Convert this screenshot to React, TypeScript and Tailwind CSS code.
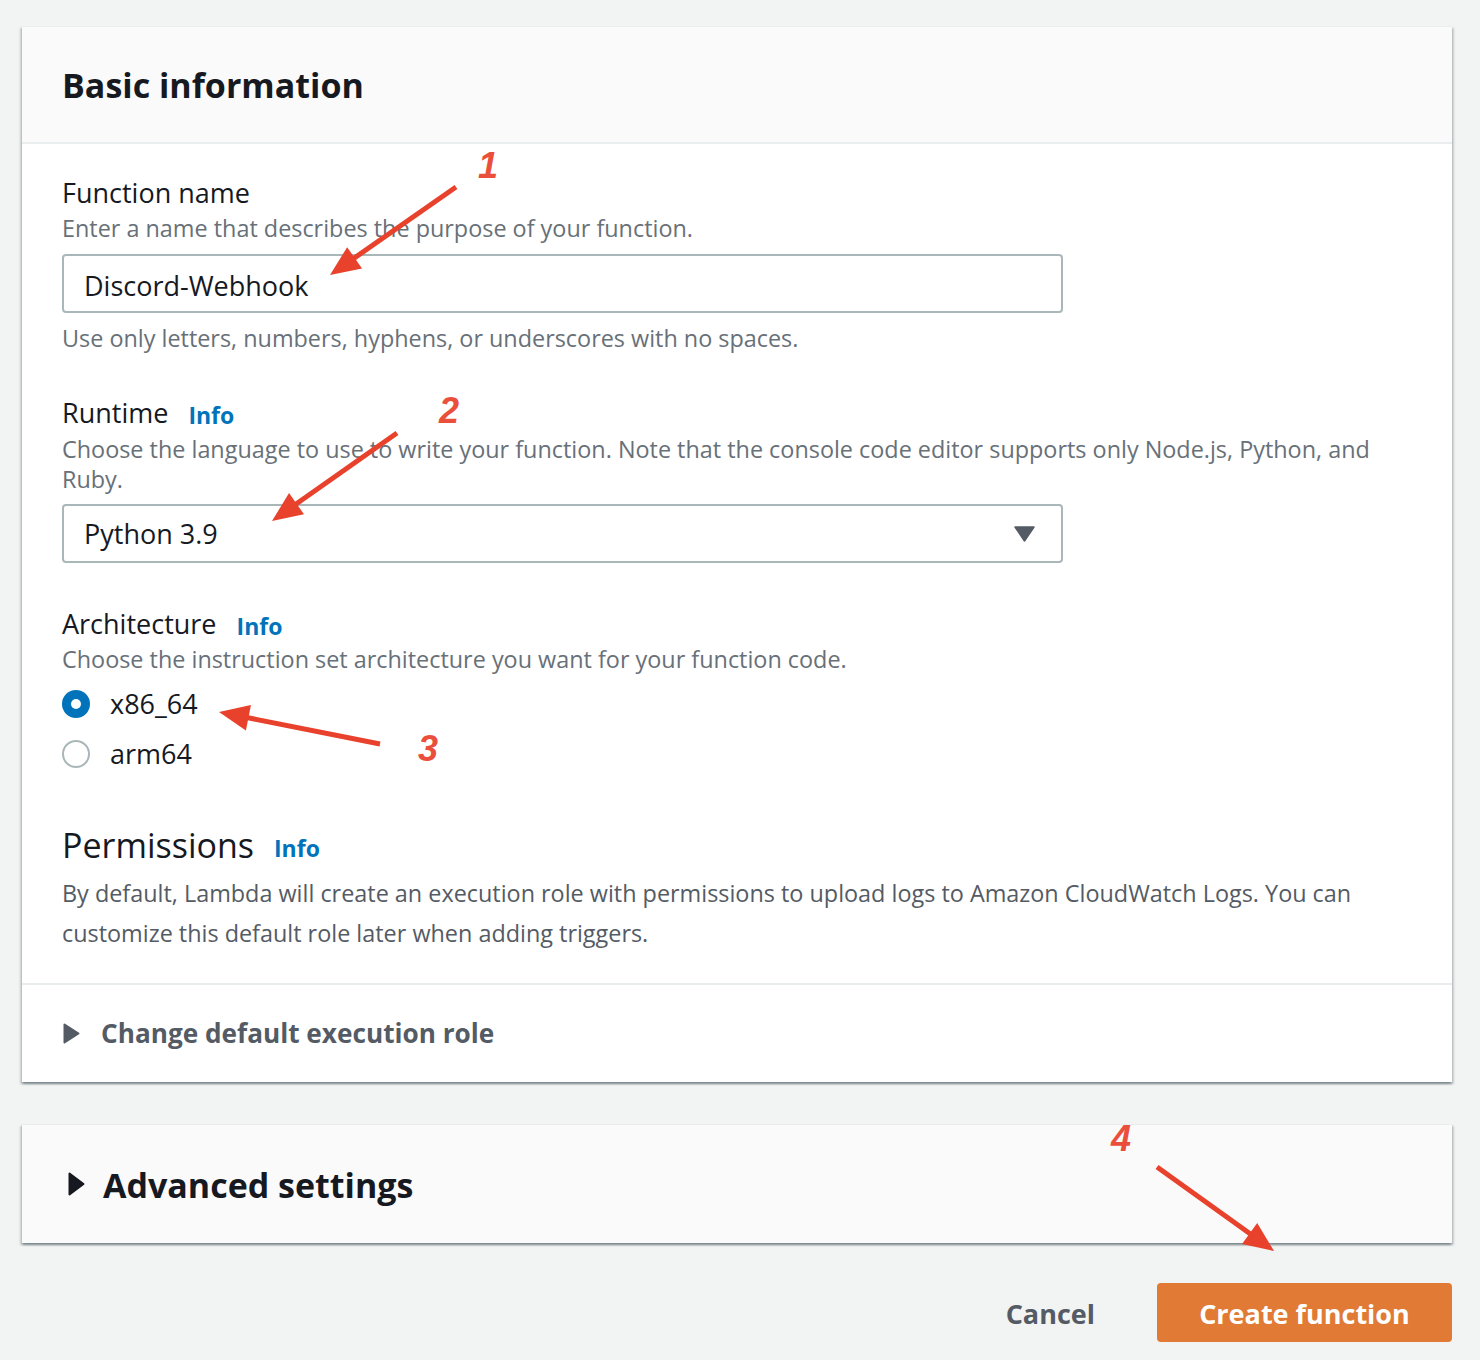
import React from "react";

const RED = "#e8412c";

function Arrow({ x1, y1, x2, y2 }: { x1: number; y1: number; x2: number; y2: number }) {
  const dx = x2 - x1;
  const dy = y2 - y1;
  const len = Math.sqrt(dx * dx + dy * dy);
  const ux = dx / len;
  const uy = dy / len;
  const hl = 30;
  const hw = 13;
  const bx = x2 - ux * hl;
  const by = y2 - uy * hl;
  const px = -uy;
  const py = ux;
  const pts = `${x2},${y2} ${bx + px * hw},${by + py * hw} ${bx - px * hw},${by - py * hw}`;
  return (
    <g>
      <line x1={x1} y1={y1} x2={bx + ux * 4} y2={by + uy * 4} stroke={RED} strokeWidth={5} />
      <polygon points={pts} fill={RED} />
    </g>
  );
}

function Num({ x, y, t }: { x: number; y: number; t: string }) {
  return (
    <text
      x={x}
      y={y}
      fill="#ea4f3b"
      fontFamily="Liberation Sans, Arial, sans-serif"
      fontWeight={700}
      fontStyle="italic"
      fontSize={36}
      textAnchor="middle"
    >
      {t}
    </text>
  );
}

function Info() {
  return <span className="text-[23px] font-bold text-[#0073bb] leading-none">Info</span>;
}

export default function App() {
  return (
    <div className="relative w-[1480px] h-[1360px] bg-[#f2f3f3] font-['Open_Sans',sans-serif] text-[#16191f] overflow-hidden">
      <div className="pt-[26px] pl-[22px]">
        {/* Card 1 */}
        <div className="w-[1430px] bg-white border-t border-[#eaeded] shadow-[0_2px_2px_0_rgba(0,28,36,0.3),2px_2px_2px_0_rgba(0,28,36,0.15),-2px_2px_2px_0_rgba(0,28,36,0.15)]">
          <div className="h-[117px] bg-[#fafafa] border-b-2 border-[#eaeded] flex items-center pl-[40px]">
            <h2 className="text-[34px] font-bold leading-none">Basic information</h2>
          </div>
          <div className="pl-[40px] pr-[40px] pt-[31px] pb-[30px] flex flex-col">
            <div className="h-[36px] flex items-center text-[27px]">Function name</div>
            <div className="mt-[3px] h-[30px] flex items-center text-[23.4px] text-[#687078]">
              Enter a name that describes the purpose of your function.
            </div>
            <div className="mt-[10px] w-[1001px] h-[59px] border-2 border-[#aab7b8] rounded-[4px] flex items-center pl-[20px] pt-[5px] text-[27px]">
              Discord-Webhook
            </div>
            <div className="mt-[11px] h-[30px] flex items-center text-[23.4px] text-[#687078]">
              Use only letters, numbers, hyphens, or underscores with no spaces.
            </div>

            <div className="mt-[41px] h-[36px] flex items-center gap-[20px] text-[27px]">
              <span>Runtime</span>
              <span className="mt-[3px]"><Info /></span>
            </div>
            <div className="mt-[3px] text-[23.4px] leading-[30px] text-[#687078]">
              Choose the language to use to write your function. Note that the console code editor supports only Node.js, Python, and
              <br />
              Ruby.
            </div>
            <div className="mt-[10px] w-[1001px] h-[59px] border-2 border-[#aab7b8] rounded-[4px] flex items-center justify-between pl-[20px] pr-[26px] text-[27px]">
              <span className="pt-[2px]">Python 3.9</span>
              <svg width="21" height="16" viewBox="0 0 21 16">
                <path d="M1 1 L20 1 L10.5 15 Z" fill="#545b64" stroke="#545b64" strokeWidth="1.5" strokeLinejoin="round" />
              </svg>
            </div>

            <div className="mt-[43px] h-[36px] flex items-center gap-[20px] text-[27px]">
              <span>Architecture</span>
              <span className="mt-[3px]"><Info /></span>
            </div>
            <div className="mt-[3px] h-[30px] flex items-center text-[23.4px] text-[#687078]">
              Choose the instruction set architecture you want for your function code.
            </div>
            <div className="mt-[4px] flex flex-col">
              <div className="h-[50px] flex items-center gap-[20px] text-[27px]">
                <span className="w-[28px] h-[28px] rounded-full bg-[#0073bb] flex items-center justify-center">
                  <span className="w-[10px] h-[10px] rounded-full bg-white" />
                </span>
                <span>x86_64</span>
              </div>
              <div className="h-[50px] flex items-center gap-[20px] text-[27px]">
                <span className="w-[28px] h-[28px] rounded-full bg-white border-2 border-[#aab7b8]" />
                <span>arm64</span>
              </div>
            </div>

            <div className="mt-[44px] h-[44px] flex items-center gap-[20px]">
              <span className="text-[34px]">Permissions</span>
              <span className="mt-[10px]"><Info /></span>
            </div>
            <div className="mt-[6px] text-[23.4px] leading-[40px] text-[#545b64]">
              By default, Lambda will create an execution role with permissions to upload logs to Amazon CloudWatch Logs. You can
              <br />
              customize this default role later when adding triggers.
            </div>
          </div>
          <div className="h-[99px] border-t-2 border-[#eaeded] flex items-center pl-[41px] gap-[21px]">
            <svg width="17" height="21" viewBox="0 0 17 21">
              <path d="M1.5 1.5 L15.5 10.5 L1.5 19.5 Z" fill="#545b64" stroke="#545b64" strokeWidth="2" strokeLinejoin="round" />
            </svg>
            <span className="text-[26.2px] font-bold text-[#545b64]">Change default execution role</span>
          </div>
        </div>

        {/* Card 2 */}
        <div className="mt-[42px] w-[1430px] h-[119px] bg-[#fafafa] border-t border-[#eaeded] shadow-[0_2px_2px_0_rgba(0,28,36,0.3),2px_2px_2px_0_rgba(0,28,36,0.15),-2px_2px_2px_0_rgba(0,28,36,0.15)] flex items-center pl-[46px] gap-[18px]">
          <svg width="17" height="24" viewBox="0 0 17 24">
            <path d="M1.5 1.5 L15.5 12 L1.5 22.5 Z" fill="#16191f" stroke="#16191f" strokeWidth="2" strokeLinejoin="round" />
          </svg>
          <span className="text-[34px] font-bold pt-[2px]">Advanced settings</span>
        </div>

        {/* Buttons */}
        <div className="mt-[40px] w-[1430px] flex justify-end items-center gap-[30px]">
          <button className="h-[59px] px-[32px] pt-[3px] text-[27px] font-bold text-[#545b64]">Cancel</button>
          <button className="w-[295px] h-[59px] pt-[3px] rounded-[4px] bg-[#e07a35] text-white text-[27px] font-bold">
            Create function
          </button>
        </div>
      </div>

      {/* Annotation overlay */}
      <svg className="absolute left-0 top-0 pointer-events-none" width="1480" height="1360" viewBox="0 0 1480 1360">
        <Arrow x1={456} y1={187} x2={330} y2={275} />
        <Num x={488} y={178} t="1" />
        <Arrow x1={397} y1={433} x2={272} y2={521} />
        <Num x={449} y={423} t="2" />
        <Arrow x1={380} y1={744} x2={219} y2={712} />
        <Num x={428} y={761} t="3" />
        <Arrow x1={1157} y1={1167} x2={1274} y2={1251} />
        <Num x={1121} y={1151} t="4" />
      </svg>
    </div>
  );
}
